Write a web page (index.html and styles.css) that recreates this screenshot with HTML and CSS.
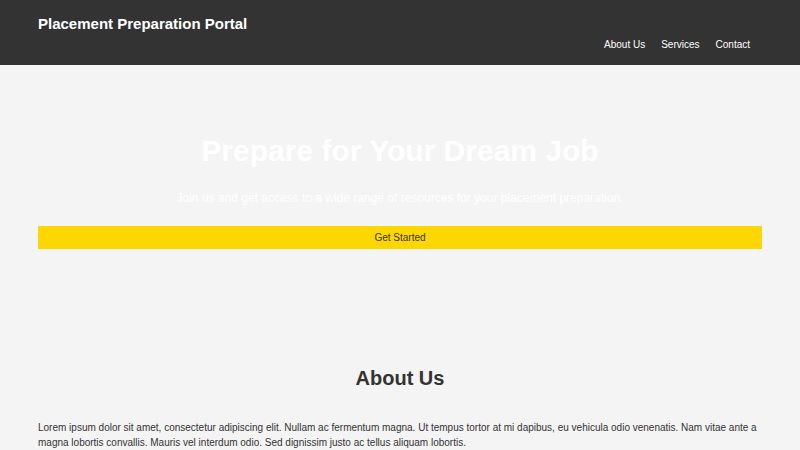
FILE: index.html
```html
<!DOCTYPE html>
<html lang="en">
<head>
<meta charset="utf-8">
<title>Placement Preparation Portal</title>
<link rel="stylesheet" href="styles.css">
</head>
<body>
<header class="site-header">
  <div class="container header-inner">
    <h1 class="brand">Placement Preparation Portal</h1>
    <nav class="nav">
      <a href="#about">About Us</a>
      <a href="#services">Services</a>
      <a href="#contact">Contact</a>
    </nav>
  </div>
</header>
<section class="hero">
  <div class="container">
    <h2 class="hero-title">Prepare for Your Dream Job</h2>
    <p class="hero-sub">Join us and get access to a wide range of resources for your placement preparation.</p>
    <a class="btn" href="#">Get Started</a>
  </div>
</section>
<section class="about" id="about">
  <div class="container">
    <h2 class="section-title">About Us</h2>
    <p class="about-text">Lorem ipsum dolor sit amet, consectetur adipiscing elit. Nullam ac fermentum magna. Ut tempus tortor at mi dapibus, eu vehicula odio venenatis. Nam vitae ante a magna lobortis convallis. Mauris vel interdum odio. Sed dignissim justo ac tellus aliquam lobortis.</p>
  </div>
</section>
</body>
</html>
```
FILE: styles.css
```css
* { box-sizing: border-box; }
body {
  margin: 0;
  font-family: "Liberation Sans", Arial, sans-serif;
  background: #f4f4f4;
  color: #333;
  font-size: 10px;
}
.container {
  padding: 0 38px;
}
.site-header {
  background: #333;
  color: #fff;
  height: 65px;
}
.header-inner {
  display: flex;
  flex-direction: column;
  padding-top: 15px;
}
.brand {
  margin: 0;
  font-size: 15px;
  line-height: 18px;
  font-weight: bold;
}
.nav {
  display: flex;
  justify-content: flex-end;
  gap: 16px;
  margin-top: 6px;
  padding-right: 12px;
}
.nav a {
  color: #fff;
  text-decoration: none;
  font-size: 10px;
  line-height: 12px;
}
.hero {
  padding-top: 68px;
  text-align: center;
  height: 301px;
}
.hero-title {
  margin: 0;
  font-size: 30px;
  line-height: 36px;
  color: #fff;
}
.hero-sub {
  margin: 22px 0 0;
  color: #fff;
  font-size: 12px;
  line-height: 14px;
}
.btn {
  display: block;
  margin-top: 21px;
  background: #ffd700;
  color: #333;
  text-decoration: none;
  font-size: 10px;
  line-height: 23px;
}
.section-title {
  margin: 0;
  text-align: center;
  font-size: 20px;
  line-height: 24px;
}
.about-text {
  margin: 30px 0 0;
  line-height: 15px;
  font-size: 10px;
}
```
